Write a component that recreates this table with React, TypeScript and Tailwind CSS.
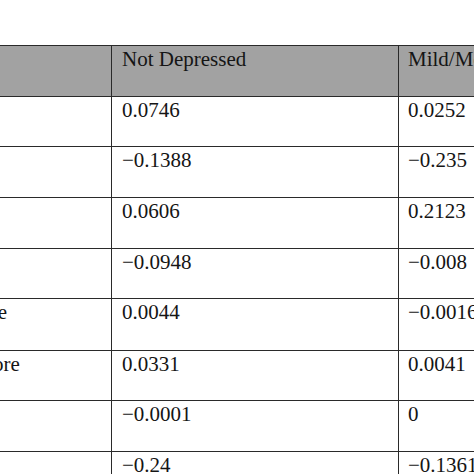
import React from "react";

const rows: { h: string; c1: string; c2: string; c3: string; header?: boolean }[] = [
  { h: "h-[51px]", c1: "", c2: "Not Depressed", c3: "Mild/Moderate", header: true },
  { h: "h-[50px]", c1: "", c2: "0.0746", c3: "0.0252" },
  { h: "h-[51px]", c1: "", c2: "\u22120.1388", c3: "\u22120.235" },
  { h: "h-[51px]", c1: "", c2: "0.0606", c3: "0.2123" },
  { h: "h-[50px]", c1: "", c2: "\u22120.0948", c3: "\u22120.008" },
  { h: "h-[52px]", c1: "Age", c2: "0.0044", c3: "\u22120.0016" },
  { h: "h-[50px]", c1: "Score", c2: "0.0331", c3: "0.0041" },
  { h: "h-[51px]", c1: "", c2: "\u22120.0001", c3: "0" },
  { h: "h-[60px]", c1: "", c2: "\u22120.24", c3: "\u22120.1361" },
];

export default function App() {
  return (
    <div className="w-[474px] h-[474px] overflow-hidden bg-white text-[#151515] font-['Liberation_Serif','Times_New_Roman',serif] text-[21px] leading-[24px]">
      <div className="pt-[45px] ml-[-38px] w-[700px]">
        {rows.map((r, i) => (
          <div
            key={i}
            className={`flex border-t border-[#2a2a2a] ${r.h} ${r.header ? "bg-[#a2a2a2]" : "bg-white"}`}
          >
            <div className="w-[150px] shrink-0 border-r border-[#2a2a2a] pl-[10px] pt-[1px] whitespace-nowrap overflow-hidden">
              {r.c1}
            </div>
            <div className="w-[287px] shrink-0 border-r border-[#2a2a2a] pl-[10px] pt-[1px] whitespace-nowrap">
              {r.c2}
            </div>
            <div className="flex-1 pl-[9px] pt-[1px] whitespace-nowrap">{r.c3}</div>
          </div>
        ))}
      </div>
    </div>
  );
}
